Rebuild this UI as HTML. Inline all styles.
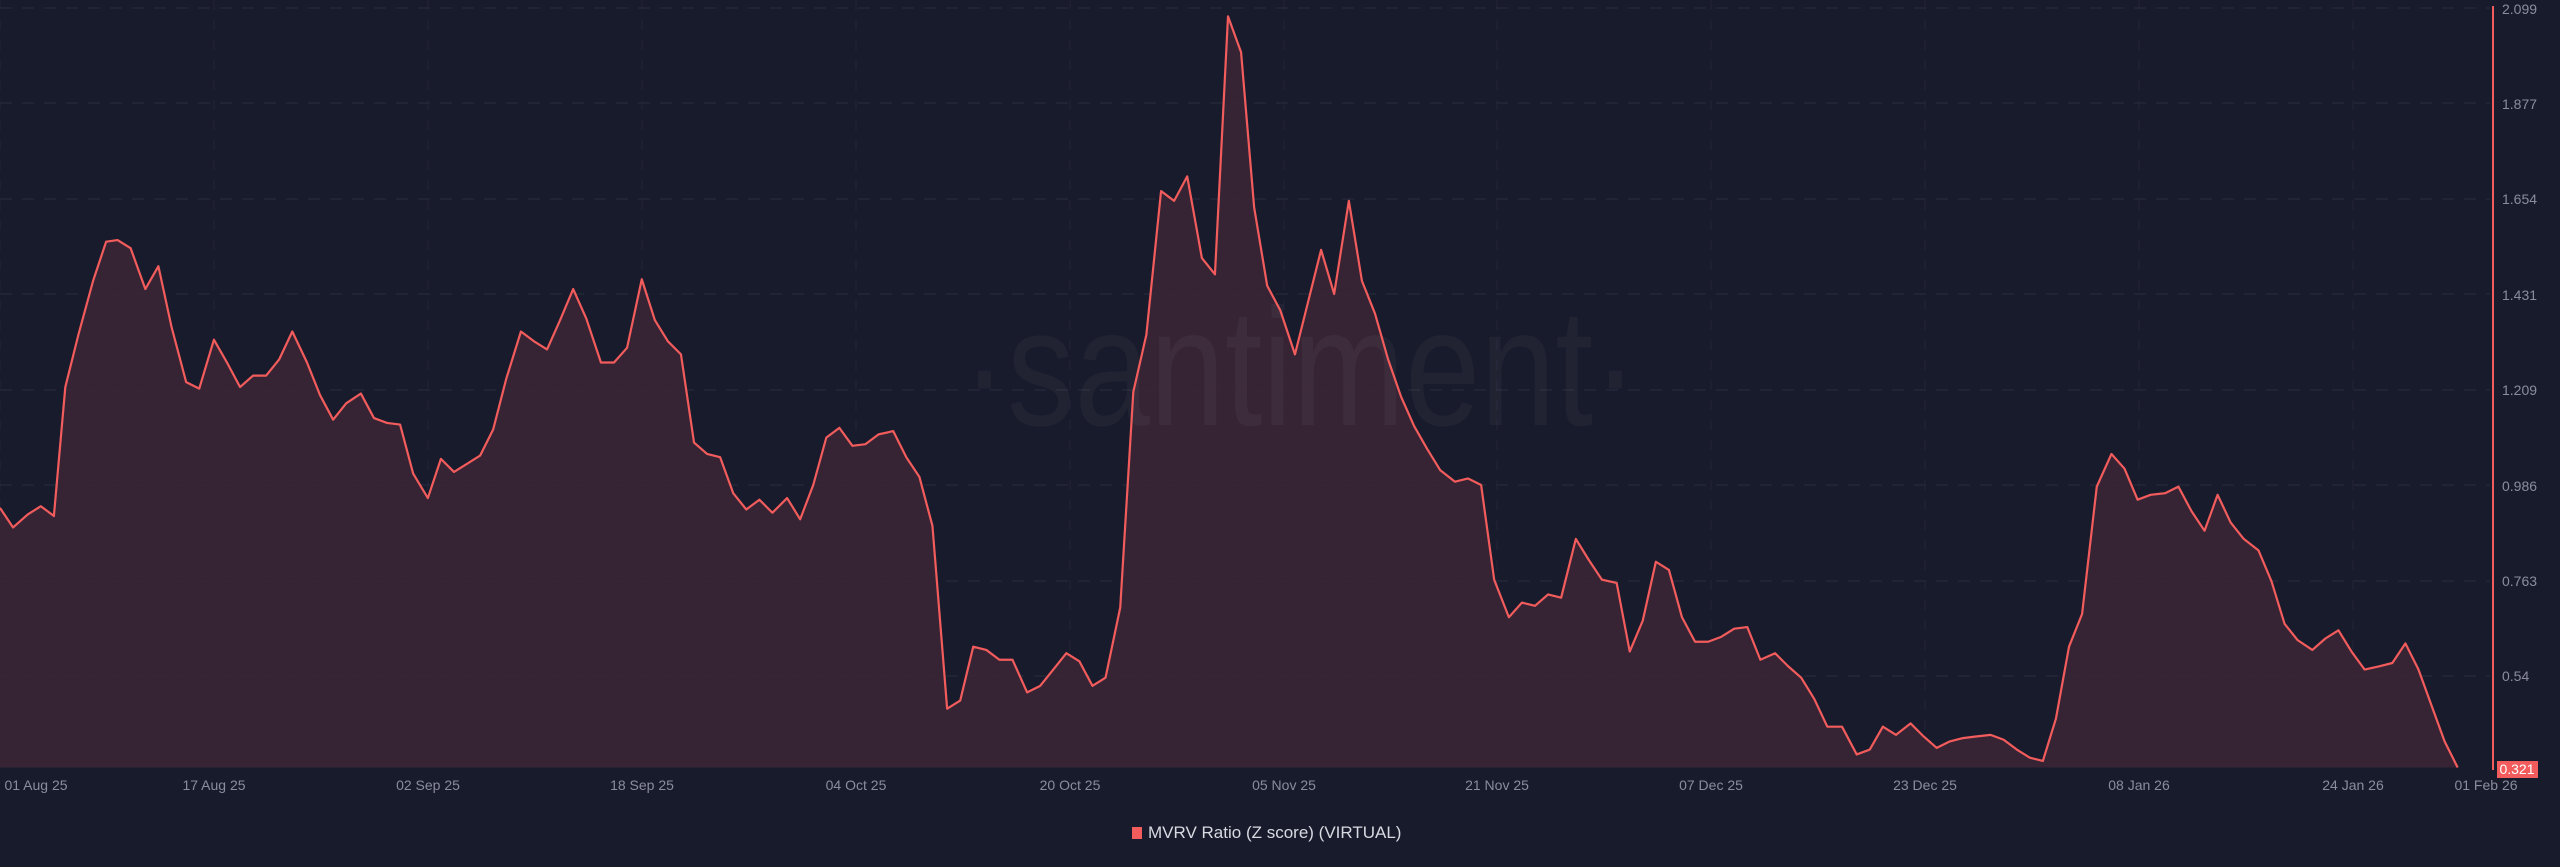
<!DOCTYPE html>
<html><head><meta charset="utf-8"><style>
html,body{margin:0;padding:0;background:#181b2b;width:2560px;height:867px;overflow:hidden;font-family:"Liberation Sans",sans-serif}
.yl{position:absolute;left:2502px;font-size:14px;color:#8a8d9c;transform:translateY(-50%)}
.xl{position:absolute;top:777px;font-size:14px;color:#8a8d9c;transform:translateX(-50%);white-space:nowrap}
</style></head><body>
<svg width="2560" height="867" style="position:absolute;left:0;top:0">
<g stroke="#2a2d3e" stroke-width="1" stroke-dasharray="12 10">
<line x1="0" y1="8" x2="2490" y2="8"/><line x1="0" y1="103" x2="2490" y2="103"/><line x1="0" y1="199" x2="2490" y2="199"/><line x1="0" y1="294" x2="2490" y2="294"/><line x1="0" y1="390" x2="2490" y2="390"/><line x1="0" y1="485" x2="2490" y2="485"/><line x1="0" y1="581" x2="2490" y2="581"/><line x1="0" y1="676" x2="2490" y2="676"/>
</g>
<g stroke="#23263a" stroke-width="1" stroke-dasharray="10 10">
<line x1="0" y1="0" x2="0" y2="767"/><line x1="214" y1="0" x2="214" y2="767"/><line x1="428" y1="0" x2="428" y2="767"/><line x1="642" y1="0" x2="642" y2="767"/><line x1="856" y1="0" x2="856" y2="767"/><line x1="1070" y1="0" x2="1070" y2="767"/><line x1="1284" y1="0" x2="1284" y2="767"/><line x1="1497" y1="0" x2="1497" y2="767"/><line x1="1711" y1="0" x2="1711" y2="767"/><line x1="1925" y1="0" x2="1925" y2="767"/><line x1="2139" y1="0" x2="2139" y2="767"/><line x1="2353" y1="0" x2="2353" y2="767"/>
</g>
<g transform="scale(1.633)">
<polygon fill="#3a2535" fill-opacity="0.92" points="0,470 0,311 8,323 17,315 25,310 33,316 40,237 48,205 57,172 65,148 72,147 80,152 89,177 97,163 105,200 114,234 122,238 131,208 139,222 147,237 155,230 163,230 171,220 179,203 188,222 196,242 204,257 212,247 221,241 229,256 237,259 245,260 253,290 262,305 270,281 278,289 286,284 294,279 302,263 310,232 319,203 327,209 335,214 343,196 351,177 359,195 368,222 376,222 384,213 393,171 401,196 409,209 417,217 425,271 433,278 441,280 449,302 457,312 465,306 473,314 482,305 490,318 498,297 506,268 514,262 522,273 530,272 538,266 547,264 555,280 563,292 571,322 580,434 588,429 596,396 604,398 612,404 620,404 629,424 637,420 645,410 653,400 661,405 669,420 677,415 686,372 694,240 702,205 711,117 719,123 727,108 736,158 744,168 752,10 760,32 768,127 776,175 784,190 793,217 801,185 809,153 817,180 826,123 834,172 842,192 850,220 858,243 866,261 874,275 882,288 891,295 899,293 907,297 915,355 924,378 932,369 940,371 948,364 956,366 965,330 973,343 981,355 990,357 998,399 1006,380 1014,344 1022,349 1030,378 1038,393 1046,393 1054,390 1062,385 1070,384 1078,404 1087,400 1095,408 1103,415 1111,428 1119,445 1128,445 1137,462 1145,459 1153,445 1161,450 1170,443 1178,451 1186,458 1194,454 1202,452 1210,451 1219,450 1227,453 1235,459 1243,464 1251,466 1259,440 1267,396 1275,376 1284,298 1293,278 1301,287 1309,306 1317,303 1326,302 1334,298 1342,313 1350,325 1358,303 1366,320 1374,330 1383,337 1391,356 1399,382 1407,392 1416,398 1424,391 1432,386 1440,399 1448,410 1457,408 1465,406 1473,394 1481,410 1489,432 1497,454 1505,470"/>
</g>
<text x="962" y="425" font-size="167" fill="#ffffff" fill-opacity="0.04" font-family="Liberation Sans" textLength="676" lengthAdjust="spacingAndGlyphs">·santiment·</text>
<g transform="scale(1.633)">
<polyline fill="none" stroke="#f25c5c" stroke-width="2.2" vector-effect="non-scaling-stroke" stroke-linejoin="round" points="0,311 8,323 17,315 25,310 33,316 40,237 48,205 57,172 65,148 72,147 80,152 89,177 97,163 105,200 114,234 122,238 131,208 139,222 147,237 155,230 163,230 171,220 179,203 188,222 196,242 204,257 212,247 221,241 229,256 237,259 245,260 253,290 262,305 270,281 278,289 286,284 294,279 302,263 310,232 319,203 327,209 335,214 343,196 351,177 359,195 368,222 376,222 384,213 393,171 401,196 409,209 417,217 425,271 433,278 441,280 449,302 457,312 465,306 473,314 482,305 490,318 498,297 506,268 514,262 522,273 530,272 538,266 547,264 555,280 563,292 571,322 580,434 588,429 596,396 604,398 612,404 620,404 629,424 637,420 645,410 653,400 661,405 669,420 677,415 686,372 694,240 702,205 711,117 719,123 727,108 736,158 744,168 752,10 760,32 768,127 776,175 784,190 793,217 801,185 809,153 817,180 826,123 834,172 842,192 850,220 858,243 866,261 874,275 882,288 891,295 899,293 907,297 915,355 924,378 932,369 940,371 948,364 956,366 965,330 973,343 981,355 990,357 998,399 1006,380 1014,344 1022,349 1030,378 1038,393 1046,393 1054,390 1062,385 1070,384 1078,404 1087,400 1095,408 1103,415 1111,428 1119,445 1128,445 1137,462 1145,459 1153,445 1161,450 1170,443 1178,451 1186,458 1194,454 1202,452 1210,451 1219,450 1227,453 1235,459 1243,464 1251,466 1259,440 1267,396 1275,376 1284,298 1293,278 1301,287 1309,306 1317,303 1326,302 1334,298 1342,313 1350,325 1358,303 1366,320 1374,330 1383,337 1391,356 1399,382 1407,392 1416,398 1424,391 1432,386 1440,399 1448,410 1457,408 1465,406 1473,394 1481,410 1489,432 1497,454 1505,470"/>
</g>
<line x1="2493" y1="6" x2="2493" y2="770" stroke="#f25c5c" stroke-width="2"/>
<rect x="2497" y="761" width="41" height="17" fill="#f25c5c"/>
<text x="2517" y="774" font-size="14" fill="#ffffff" text-anchor="middle" font-family="Liberation Sans">0.321</text>
<rect x="1132" y="827" width="10" height="12" fill="#f25c5c"/>
</svg>
<div class="yl" style="top:9px">2.099</div>
<div class="yl" style="top:104px">1.877</div>
<div class="yl" style="top:199px">1.654</div>
<div class="yl" style="top:295px">1.431</div>
<div class="yl" style="top:390px">1.209</div>
<div class="yl" style="top:486px">0.986</div>
<div class="yl" style="top:581px">0.763</div>
<div class="yl" style="top:676px">0.54</div>
<div class="xl" style="left:36px">01 Aug 25</div>
<div class="xl" style="left:214px">17 Aug 25</div>
<div class="xl" style="left:428px">02 Sep 25</div>
<div class="xl" style="left:642px">18 Sep 25</div>
<div class="xl" style="left:856px">04 Oct 25</div>
<div class="xl" style="left:1070px">20 Oct 25</div>
<div class="xl" style="left:1284px">05 Nov 25</div>
<div class="xl" style="left:1497px">21 Nov 25</div>
<div class="xl" style="left:1711px">07 Dec 25</div>
<div class="xl" style="left:1925px">23 Dec 25</div>
<div class="xl" style="left:2139px">08 Jan 26</div>
<div class="xl" style="left:2353px">24 Jan 26</div>
<div class="xl" style="left:2486px">01 Feb 26</div>
<div style="position:absolute;left:1148px;top:823px;font-size:17px;color:#d8dae2;white-space:nowrap">MVRV Ratio (Z score) (VIRTUAL)</div>
</body></html>
